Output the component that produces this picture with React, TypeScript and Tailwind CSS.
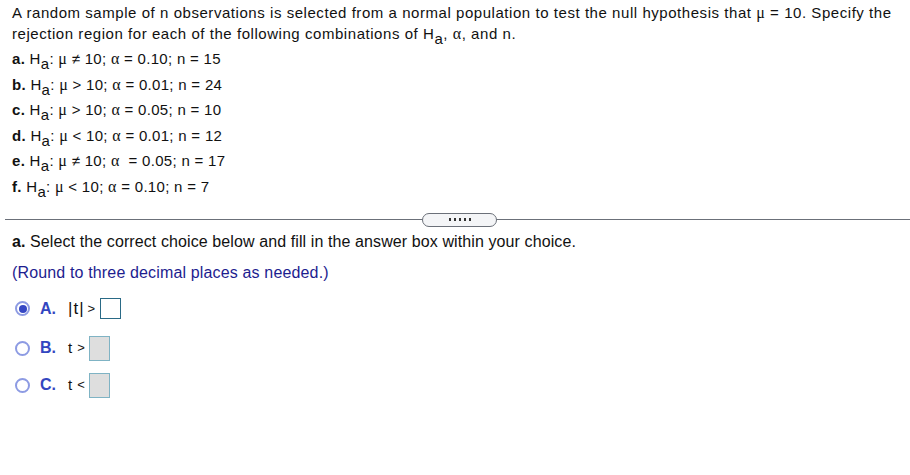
import React from "react";

const Ha = () => (
  <span>
    H<sub className="relative top-[1px] align-sub leading-none" style={{ fontSize: "15px" }}>a</sub>
  </span>
);

const Mu = () => <span className="text-[16px]" style={{ fontFamily: '"Liberation Serif", "Times New Roman", serif' }}>μ</span>;
const Al = () => <span className="text-[16px]" style={{ fontFamily: '"Liberation Serif", "Times New Roman", serif' }}>α</span>;

const items: [string, React.ReactNode][] = [
  ["a.", <>: <Mu /> ≠ 10; <Al /> = 0.10; n = 15</>],
  ["b.", <>: <Mu /> &gt; 10; <Al /> = 0.01; n = 24</>],
  ["c.", <>: <Mu /> &gt; 10; <Al /> = 0.05; n = 10</>],
  ["d.", <>: <Mu /> &lt; 10; <Al /> = 0.01; n = 12</>],
  ["e.", <>: <Mu /> ≠ 10; <Al /> &nbsp;= 0.05; n = 17</>],
  ["f.", <>: <Mu /> &lt; 10; <Al /> = 0.10; n = 7</>],
];

function Radio({ checked }: { checked?: boolean }) {
  return (
    <span className="w-[15px] h-[15px] rounded-full border-2 border-[#8d9be3] flex items-center justify-center bg-white shrink-0">
      {checked && <span className="w-[8px] h-[8px] rounded-full bg-[#3648c4]" />}
    </span>
  );
}

export default function App() {
  return (
    <div
      className="w-[910px] h-[475px] bg-white text-[#111] text-[15px] overflow-hidden"
      style={{ fontFamily: '"Liberation Sans", Arial, sans-serif' }}
    >
      <div className="pl-[12px] pt-[2px]">
        <p className="leading-[21px] tracking-[0.55px]">
          A random sample of n observations is selected from a normal population to test the null hypothesis that <Mu /> = 10. Specify the
          rejection region for each of the following combinations of <Ha />, <Al />, and n.
        </p>
        <div className="mt-[1px] tracking-[0.3px]">
          {items.map(([l, r]) => (
            <div key={l} className="h-[25.6px] leading-[25.6px]">
              <b>{l}</b> <Ha />
              {r}
            </div>
          ))}
        </div>
      </div>
      <div className="relative mt-[13px] ml-[5px] h-[14px] flex items-center">
        <div className="w-full h-[1.5px] bg-[#6b7079]" />
        <div className="absolute left-[417px] top-0 w-[75px] h-[14px] rounded-full border border-[#6b7079] bg-[#f4f5f7] flex items-center justify-center gap-[3px]">
          {[0, 1, 2, 3, 4].map((i) => (
            <span key={i} className="w-[2px] h-[3px] bg-[#333]" />
          ))}
        </div>
      </div>
      <div className="pl-[12px]">
        <div className="mt-[5px] leading-[20px] text-[16px] tracking-[0.1px]">
          <b>a.</b> Select the correct choice below and fill in the answer box within your choice.
        </div>
        <div className="mt-[11px] leading-[20px] text-[16px] tracking-[0.15px] text-[#1d1d8f]">(Round to three decimal places as needed.)</div>
        <div className="mt-[15px] flex items-center h-[22px] pl-[3px]">
          <Radio checked />
          <span className="ml-[10px] font-bold text-[16px] text-[#3346c0] w-[28px]">A.</span>
          <span className="ml-[0px] text-[17px] leading-none tracking-[1px]">|t|</span>
          <span className="ml-[3px] text-[13px]">&gt;</span>
          <span className="ml-[5px] w-[21px] h-[21px] border-[1.5px] border-[#2a6a86] bg-white" />
        </div>
        <div className="mt-[16px] flex items-center h-[25px] pl-[3px]">
          <Radio />
          <span className="ml-[10px] font-bold text-[16px] text-[#3346c0] w-[28px]">B.</span>
          <span className="ml-[0px]">t</span>
          <span className="ml-[5px] text-[13px]">&gt;</span>
          <span className="ml-[4px] w-[21px] h-[25px] border border-[#7fb3c4] bg-[#dedede]" />
        </div>
        <div className="mt-[12px] flex items-center h-[25px] pl-[3px]">
          <Radio />
          <span className="ml-[10px] font-bold text-[16px] text-[#3346c0] w-[28px]">C.</span>
          <span className="ml-[0px]">t</span>
          <span className="ml-[5px] text-[13px]">&lt;</span>
          <span className="ml-[4px] w-[21px] h-[25px] border border-[#7fb3c4] bg-[#dedede]" />
        </div>
      </div>
    </div>
  );
}
